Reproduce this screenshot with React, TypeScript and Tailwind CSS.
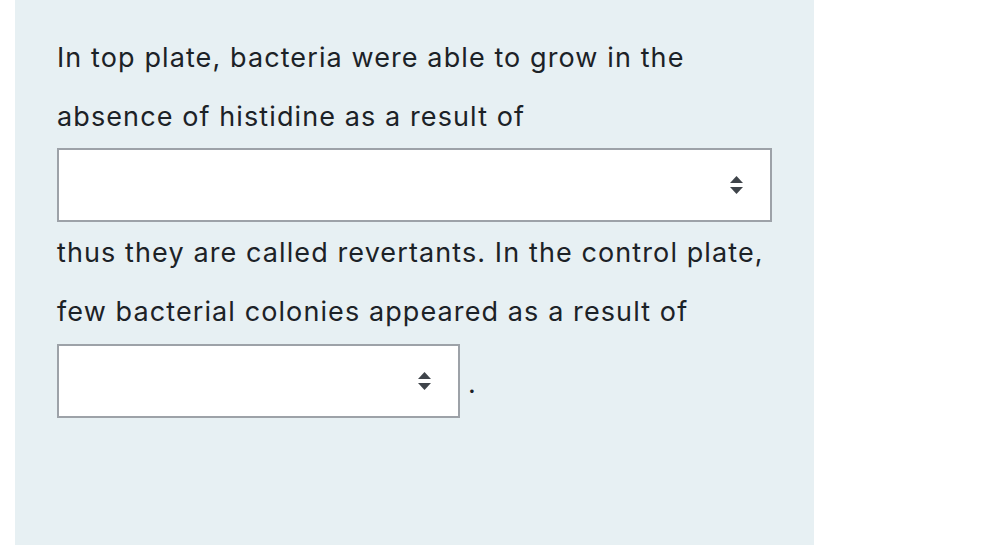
function SortArrows() {
  return (
    <svg width="15" height="20" viewBox="0 0 15 20" className="text-[#3f444a]">
      <path d="M7.5 1 L14 8 L1 8 Z" fill="currentColor" />
      <path d="M7.5 19 L14 12 L1 12 Z" fill="currentColor" />
    </svg>
  );
}

function SelectBox({ width }: { width: string }) {
  return (
    <div className={`${width} h-[74px] border-2 border-[#9da2a8] bg-white flex items-center justify-end pr-[26px]`}>
      <SortArrows />
    </div>
  );
}

export default function App() {
  const textClass = "text-[27px] leading-[59px] tracking-[1.1px]";

  return (
    <main className="w-[998px] h-[545px] bg-white overflow-hidden" style={{ fontFamily: "Inter, sans-serif" }}>
      <div className="ml-[15px] w-[799px] h-full bg-[#e7f0f3] pl-[42px] pt-[28px] text-[#1c2227]">
        <div className="w-[722px]">
          <p className={textClass}>
            In top plate, bacteria were able to grow in the absence of histidine as a result of
          </p>
          <div className="mt-[2px]">
            <SelectBox width="w-[715px]" />
          </div>
          <p className={`mt-[1px] ${textClass}`}>
            thus they are called revertants. In the control plate, few bacterial colonies appeared as a result of
          </p>
          <div className="mt-[3px] flex items-center">
            <SelectBox width="w-[403px]" />
            <span className="ml-[8px] mt-[4px] text-[27px] leading-none">.</span>
          </div>
        </div>
      </div>
    </main>
  );
}
